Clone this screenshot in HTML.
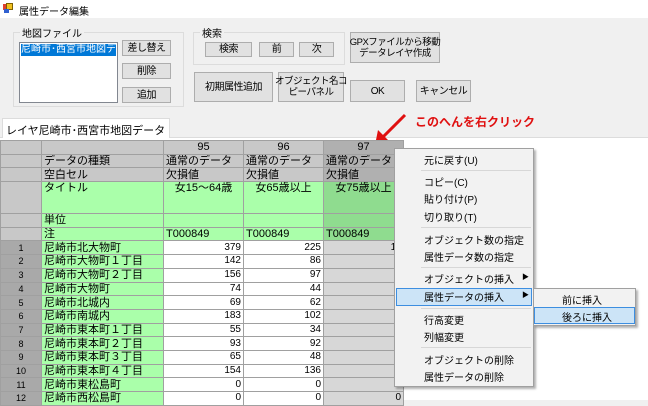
<!DOCTYPE html>
<html><head><meta charset="utf-8"><style>
*{margin:0;padding:0;box-sizing:border-box}
body{width:648px;height:400px;overflow:hidden;background:#f0f0f0;font-family:"Liberation Sans","Noto Sans CJK JP",sans-serif;font-size:11px;color:#000;position:relative}
.a{position:absolute}
.btn{position:absolute;background:#e1e1e1;border:1px solid #adadad;display:flex;align-items:center;justify-content:center;text-align:center;font-size:10px;line-height:11px;white-space:nowrap;letter-spacing:-0.5px}
.grp{position:absolute;border:1px solid #dcdcdc}
.gl{position:absolute;top:-8px;left:6px;background:#f0f0f0;padding:0 2px;font-size:10px}
table{border-collapse:collapse;position:absolute;left:0;top:140px;table-layout:fixed}
td{border:1px solid #a0a0a0;font-size:11px;line-height:12px;white-space:nowrap;overflow:hidden;padding:0 2px;height:13.7px}
.rh{background:#a9a9a9;text-align:center;font-size:9px}
.g{background:#c8c8c8}.gd{background:#b0b0b0}
.gr{background:#aaffaa}.grd{background:#8fdc8f}
.w{background:#fff;text-align:right;font-size:10px}.wd{background:#d7d7d7;text-align:right;font-size:10px}
.menu{position:absolute;background:#f2f2f2;border:1px solid #a0a0a0;box-shadow:2px 2px 2px rgba(0,0,0,.3);font-size:10px}
.mi{position:absolute;left:29px}
.sep{position:absolute;left:26px;right:2px;height:1px;background:#d7d7d7}
</style></head><body>
<div class="a" style="left:0;top:0;width:648px;height:18px;background:#fff"></div>
<div class="a" style="left:3px;top:4px;width:6px;height:6px;background:#e04030"></div>
<div class="a" style="left:6px;top:3px;width:7px;height:7px;background:#f0c020;border:1px solid #806000"></div>
<div class="a" style="left:4px;top:9px;width:5px;height:4px;background:#3060d0"></div>
<div class="a" style="left:19px;top:3px;font-size:10px">属性データ編集</div>

<div class="grp" style="left:13px;top:32px;width:171px;height:75px"><span class="gl">地図ファイル</span></div>
<div class="a" style="left:19px;top:42px;width:99px;height:61px;background:#fff;border:1px solid #828790"></div>
<div class="a" style="left:21px;top:44px;width:95px;height:12px;background:#0078d7;color:#fff;font-size:10px;line-height:12px;overflow:hidden;white-space:nowrap">尼崎市･西宮市地図デー</div>
<div class="btn" style="left:122px;top:40px;width:49px;height:16px">差し替え</div>
<div class="btn" style="left:122px;top:63px;width:49px;height:16px">削除</div>
<div class="btn" style="left:122px;top:87px;width:49px;height:16px">追加</div>

<div class="grp" style="left:193px;top:32px;width:152px;height:33px"><span class="gl">検索</span></div>
<div class="btn" style="left:205px;top:42px;width:47px;height:15px">検索</div>
<div class="btn" style="left:259px;top:42px;width:35px;height:15px">前</div>
<div class="btn" style="left:299px;top:42px;width:35px;height:15px">次</div>
<div class="btn" style="left:350px;top:32px;width:90px;height:31px;font-size:9.5px">GPXファイルから移動<br>データレイヤ作成</div>
<div class="btn" style="left:194px;top:72px;width:79px;height:30px">初期属性追加</div>
<div class="btn" style="left:278px;top:72px;width:66px;height:30px;font-size:9.5px">オブジェクト名コ<br>ピーパネル</div>
<div class="btn" style="left:350px;top:80px;width:55px;height:22px">OK</div>
<div class="btn" style="left:416px;top:80px;width:55px;height:22px">キャンセル</div>

<div class="a" style="left:0;top:137px;width:648px;height:263px;background:#fff;border-top:1px solid #dcdcdc"></div>
<div class="a" style="left:2px;top:118px;width:168px;height:20px;background:#fff;border:1px solid #dcdcdc;border-bottom:none;font-size:11px;padding:3px 0 0 3px">レイヤ尼崎市･西宮市地図データ</div>
<div class="a" style="left:415px;top:113px;color:#e01010;font-weight:bold;font-size:12px">このへんを右クリック</div>
<svg class="a" style="left:372px;top:112px" width="36" height="36"><line x1="33" y1="3" x2="10" y2="26" stroke="#e01010" stroke-width="3"/><polygon points="3,33 6,18 18,30" fill="#e01010"/></svg>

<table>
<colgroup><col style="width:41px"><col style="width:122px"><col style="width:80px"><col style="width:80px"><col style="width:80px"></colgroup>
<tr><td class="g"></td><td class="g"></td><td class="g" style="text-align:center">95</td><td class="g" style="text-align:center">96</td><td class="gd" style="text-align:center">97</td></tr>
<tr><td class="g"></td><td class="g">データの種類</td><td class="g">通常のデータ</td><td class="g">通常のデータ</td><td class="gd">通常のデータ</td></tr>
<tr><td class="g"></td><td class="g">空白セル</td><td class="g">欠損値</td><td class="g">欠損値</td><td class="gd">欠損値</td></tr>
<tr><td class="g" style="height:32px"></td><td class="gr" style="vertical-align:top">タイトル</td><td class="gr" style="vertical-align:top;text-align:center">女15～64歳</td><td class="gr" style="vertical-align:top;text-align:center">女65歳以上</td><td class="grd" style="vertical-align:top;text-align:center">女75歳以上</td></tr>
<tr><td class="g"></td><td class="gr">単位</td><td class="gr"></td><td class="gr"></td><td class="grd"></td></tr>
<tr><td class="g"></td><td class="gr">注</td><td class="gr">T000849</td><td class="gr">T000849</td><td class="grd">T000849</td></tr>
<tr><td class="rh">1</td><td class="gr">尼崎市北大物町</td><td class="w">379</td><td class="w">225</td><td class="wd">11</td></tr>
<tr><td class="rh">2</td><td class="gr">尼崎市大物町１丁目</td><td class="w">142</td><td class="w">86</td><td class="wd">4</td></tr>
<tr><td class="rh">3</td><td class="gr">尼崎市大物町２丁目</td><td class="w">156</td><td class="w">97</td><td class="wd">5</td></tr>
<tr><td class="rh">4</td><td class="gr">尼崎市大物町</td><td class="w">74</td><td class="w">44</td><td class="wd">2</td></tr>
<tr><td class="rh">5</td><td class="gr">尼崎市北城内</td><td class="w">69</td><td class="w">62</td><td class="wd">3</td></tr>
<tr><td class="rh">6</td><td class="gr">尼崎市南城内</td><td class="w">183</td><td class="w">102</td><td class="wd">5</td></tr>
<tr><td class="rh">7</td><td class="gr">尼崎市東本町１丁目</td><td class="w">55</td><td class="w">34</td><td class="wd">2</td></tr>
<tr><td class="rh">8</td><td class="gr">尼崎市東本町２丁目</td><td class="w">93</td><td class="w">92</td><td class="wd">6</td></tr>
<tr><td class="rh">9</td><td class="gr">尼崎市東本町３丁目</td><td class="w">65</td><td class="w">48</td><td class="wd">3</td></tr>
<tr><td class="rh">10</td><td class="gr">尼崎市東本町４丁目</td><td class="w">154</td><td class="w">136</td><td class="wd">8</td></tr>
<tr><td class="rh">11</td><td class="gr">尼崎市東松島町</td><td class="w">0</td><td class="w">0</td><td class="wd"></td></tr>
<tr><td class="rh">12</td><td class="gr">尼崎市西松島町</td><td class="w">0</td><td class="w">0</td><td class="wd">0</td></tr>
</table>

<div class="menu" style="left:394px;top:148px;width:140px;height:239px">
<div class="mi" style="top:3px">元に戻す(U)</div>
<div class="sep" style="top:21px"></div>
<div class="mi" style="top:25px">コピー(C)</div>
<div class="mi" style="top:42px">貼り付け(P)</div>
<div class="mi" style="top:60px">切り取り(T)</div>
<div class="sep" style="top:78px"></div>
<div class="mi" style="top:83px">オブジェクト数の指定</div>
<div class="mi" style="top:100px">属性データ数の指定</div>
<div class="sep" style="top:118px"></div>
<div class="mi" style="top:122px">オブジェクトの挿入</div><div class="a" style="left:127px;top:123px;font-size:7px">▶</div>
<div class="a" style="left:1px;top:139px;width:136px;height:18px;background:#cce4f7;border:1px solid #3d8ee0"></div>
<div class="mi" style="top:140px">属性データの挿入</div><div class="a" style="left:127px;top:141px;font-size:7px">▶</div>
<div class="sep" style="top:159px"></div>
<div class="mi" style="top:163px">行高変更</div>
<div class="mi" style="top:180px">列幅変更</div>
<div class="sep" style="top:198px"></div>
<div class="mi" style="top:203px">オブジェクトの削除</div>
<div class="mi" style="top:220px">属性データの削除</div>
</div>
<div class="menu" style="left:533px;top:288px;width:103px;height:38px">
<div class="a" style="left:28px;top:3px">前に挿入</div>
<div class="a" style="left:0px;top:18px;width:101px;height:17px;background:#cce4f7;border:1px solid #3d8ee0"></div>
<div class="a" style="left:28px;top:20px">後ろに挿入</div>
</div>
</body></html>
